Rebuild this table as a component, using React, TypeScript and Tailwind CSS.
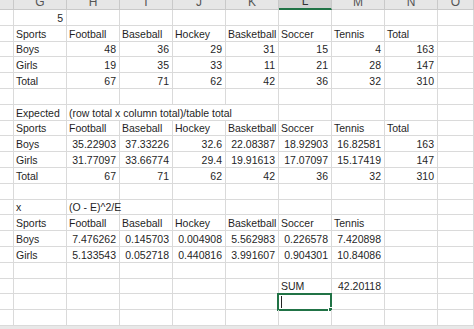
type Align = "l" | "r";

interface CellData {
  v: string;
  a?: Align;
  span?: boolean;
}

const cols = ["G", "H", "I", "J", "K", "L", "M", "N", "O"];

const L = (v: string): CellData => ({ v, a: "l" });
const R = (v: string): CellData => ({ v, a: "r" });

const sportsHeader = [
  L("Sports"),
  L("Football"),
  L("Baseball"),
  L("Hockey"),
  L("Basketball"),
  L("Soccer"),
  L("Tennis"),
];

const rows: (CellData | null)[][] = [
  [R("5")],
  [...sportsHeader, L("Total")],
  [L("Boys"), R("48"), R("36"), R("29"), R("31"), R("15"), R("4"), R("163")],
  [L("Girls"), R("19"), R("35"), R("33"), R("11"), R("21"), R("28"), R("147")],
  [L("Total"), R("67"), R("71"), R("62"), R("42"), R("36"), R("32"), R("310")],
  [],
  [L("Expected"), { v: "(row total x column total)/table total", a: "l", span: true }],
  [...sportsHeader, L("Total")],
  [
    L("Boys"),
    R("35.22903"),
    R("37.33226"),
    R("32.6"),
    R("22.08387"),
    R("18.92903"),
    R("16.82581"),
    R("163"),
  ],
  [
    L("Girls"),
    R("31.77097"),
    R("33.66774"),
    R("29.4"),
    R("19.91613"),
    R("17.07097"),
    R("15.17419"),
    R("147"),
  ],
  [L("Total"), R("67"), R("71"), R("62"), R("42"), R("36"), R("32"), R("310")],
  [],
  [L("x"), L("(O - E)^2/E")],
  [...sportsHeader],
  [
    L("Boys"),
    R("7.476262"),
    R("0.145703"),
    R("0.004908"),
    R("5.562983"),
    R("0.226578"),
    R("7.420898"),
  ],
  [
    L("Girls"),
    R("5.133543"),
    R("0.052718"),
    R("0.440816"),
    R("3.991607"),
    R("0.904301"),
    R("10.84086"),
  ],
  [],
  [null, null, null, null, null, L("SUM"), R("42.20118")],
  [],
  [],
];

const SEL_ROW = 18;
const SEL_COL = 5;

export default function App() {
  return (
    <div className="h-[329px] w-[474px] overflow-hidden bg-white font-['Liberation_Sans',Arial,sans-serif] text-[10.5px] text-[#1f1f1f]">
      <div className="grid grid-cols-[14px_repeat(8,53px)_minmax(0,1fr)]">
        {/* column headers */}
        <div className="h-[10px] border-b border-r border-[#c9c9c9] bg-[#e6e6e6]" />
        {cols.map((c) => (
          <div
            key={c}
            className={`flex h-[10px] items-end justify-center overflow-hidden border-r pb-[2px] text-[12px] leading-[10px] ${
              c === "L"
                ? "border-b-2 border-r-[#c9c9c9] border-b-[#217346] bg-[#d3d3d3] text-[#333]"
                : "border-b border-[#c9c9c9] bg-[#e6e6e6] text-[#555]"
            }`}
          >
            {c}
          </div>
        ))}

        {rows.map((row, r) => {
          const cells = [];
          cells.push(
            <div key={`rh${r}`} className="h-[15.8px] border-b border-r border-[#dadada]" />,
          );
          let i = 0;
          while (i < cols.length) {
            const cell = row[i] ?? null;
            const span = cell?.span;
            const selected = r === SEL_ROW && i === SEL_COL;
            cells.push(
              <div
                key={`${r}-${i}`}
                className={`relative flex h-[15.8px] items-end whitespace-nowrap border-b border-r border-[#dadada] px-[2px] pb-[1px] leading-[12px] ${
                  cell?.a === "r" ? "justify-end pr-[3px]" : "justify-start"
                } ${span ? "col-span-4" : ""}`}
              >
                {cell?.v}
                {selected && (
                  <div className="absolute -left-[2px] -top-[1px] h-[17.8px] w-[55px] border-2 border-[#217346]">
                    <div className="absolute left-[2px] top-[1px] h-[12px] w-px bg-[#222]" />
                    <div className="absolute -bottom-[3px] -right-[3px] h-[5px] w-[5px] border border-white bg-[#217346]" />
                  </div>
                )}
              </div>,
            );
            i += span ? 4 : 1;
          }
          return cells;
        })}
      </div>
      <div className="h-[3px] bg-[#e8e8e8]" />
    </div>
  );
}
